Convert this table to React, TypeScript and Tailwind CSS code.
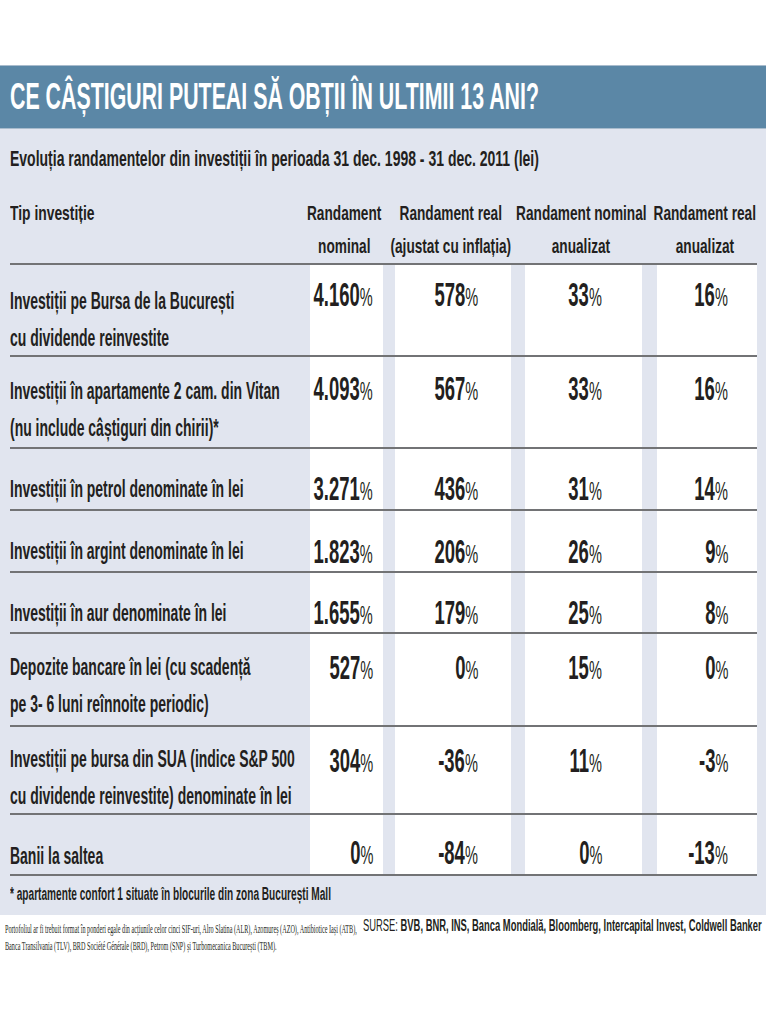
const sans = "font-['Liberation_Sans',Arial,sans-serif]";
const serif = "font-['Liberation_Serif','Times_New_Roman',serif]";

type Row = {
  label: string[];
  vals: string[];
  h: string;
  lpt: string;
  npt: string;
};

const rows: Row[] = [
  {
    label: ["Investiții pe Bursa de la București", "cu dividende reinvestite"],
    vals: ["4.160", "578", "33", "16"],
    h: "h-[92px]",
    lpt: "pt-[17px]",
    npt: "pt-[13px]",
  },
  {
    label: ["Investiții în apartamente 2 cam. din Vitan", "(nu include câștiguri din chirii)*"],
    vals: ["4.093", "567", "33", "16"],
    h: "h-[92px]",
    lpt: "pt-[15px]",
    npt: "pt-[15px]",
  },
  {
    label: ["Investiții în petrol denominate în lei"],
    vals: ["3.271", "436", "31", "14"],
    h: "h-[62px]",
    lpt: "pt-[21px]",
    npt: "pt-[23px]",
  },
  {
    label: ["Investiții în argint denominate în lei"],
    vals: ["1.823", "206", "26", "9"],
    h: "h-[62px]",
    lpt: "pt-[21px]",
    npt: "pt-[24px]",
  },
  {
    label: ["Investiții în aur denominate în lei"],
    vals: ["1.655", "179", "25", "8"],
    h: "h-[61px]",
    lpt: "pt-[21px]",
    npt: "pt-[23px]",
  },
  {
    label: ["Depozite bancare în lei (cu scadență", "pe 3- 6 luni reînnoite periodic)"],
    vals: ["527", "0", "15", "0"],
    h: "h-[93px]",
    lpt: "pt-[14px]",
    npt: "pt-[17px]",
  },
  {
    label: ["Investiții pe bursa din SUA (indice S&P 500", "cu dividende reinvestite) denominate în lei"],
    vals: ["304", "-36", "11", "-3"],
    h: "h-[88px]",
    lpt: "pt-[13px]",
    npt: "pt-[17px]",
  },
  {
    label: ["Banii la saltea"],
    vals: ["0", "-84", "0", "-13"],
    h: "h-[61px]",
    lpt: "pt-[22px]",
    npt: "pt-[21px]",
  },
];

const cols = [
  { w: "w-[73px]", ml: "", pr: "pr-[10px]" },
  { w: "w-[116px]", ml: "ml-[12px]", pr: "pr-[33px]" },
  { w: "w-[117px]", ml: "ml-[14px]", pr: "pr-[40px]" },
  { w: "w-[100px]", ml: "ml-[15px]", pr: "pr-[29px]" },
];

const heads = [
  ["Randament", "nominal"],
  ["Randament real", "(ajustat cu inflația)"],
  ["Randament nominal", "anualizat"],
  ["Randament real", "anualizat"],
];

function Num({ v }: { v: string }) {
  return (
    <span className="inline-block origin-right scale-x-[0.56] whitespace-nowrap">
      <span className="font-bold">{v}</span>
      <span className="text-[26px] font-normal">%</span>
    </span>
  );
}

export default function App() {
  return (
    <div className={`${sans} h-[1024px] w-[768px] overflow-hidden bg-white text-[#231f20]`}>
      <div className="h-[65px]" />

      {/* title band */}
      <div className="h-[64px] w-[766px] border-y border-[#a9bccd] bg-[#5b87a6] pl-[10px] pt-[13px]">
        <span className="inline-block origin-left scale-x-[0.593] whitespace-nowrap text-[36px] leading-none font-bold text-white">
          CE CÂȘTIGURI PUTEAI SĂ OBȚII ÎN ULTIMII 13 ANI?
        </span>
      </div>

      <div className="h-[786px] w-[766px] bg-[#e1e5ef]">
        <div className="h-[42px] pl-[10px] pt-[19px]">
          <span className="block origin-left scale-x-[0.622] whitespace-nowrap text-[22.5px] leading-none font-bold">
            Evoluția randamentelor din investiții în perioada 31 dec. 1998 - 31 dec. 2011 (lei)
          </span>
        </div>

        {/* header */}
        <div className="ml-[10px] flex h-[94px] w-[747px] border-b-2 border-[#727375] pt-[25px] text-[21px] leading-[33px] font-bold">
          <div className="w-[300px]">
            <span className="block origin-left scale-x-[0.66] whitespace-nowrap">Tip investiție</span>
          </div>
          {heads.map((h, i) => (
            <div key={i} className={`${cols[i].w} ${cols[i].ml} flex flex-col items-center pr-[5px]`}>
              {h.map((t) => (
                <span key={t} className="origin-center scale-x-[0.65] whitespace-nowrap">
                  {t}
                </span>
              ))}
            </div>
          ))}
        </div>

        {rows.map((r, ri) => (
          <div key={ri} className={`ml-[10px] flex w-[747px] border-b-2 border-[#727375] ${r.h}`}>
            <div className={`w-[300px] text-[24.5px] leading-[37px] font-bold ${r.lpt}`}>
              {r.label.map((l) => (
                <span key={l} className="block origin-left scale-x-[0.57] whitespace-nowrap">
                  {l}
                </span>
              ))}
            </div>
            {r.vals.map((v, i) => (
              <div
                key={i}
                className={`${cols[i].w} ${cols[i].ml} ${cols[i].pr} ${r.npt} flex items-start justify-end bg-white text-[33px] leading-none`}
              >
                <Num v={v} />
              </div>
            ))}
          </div>
        ))}

        <div className="pl-[10px] pt-[9px]">
          <span className="block origin-left scale-x-[0.562] whitespace-nowrap text-[18px] leading-none font-bold">
            * apartamente confort 1 situate în blocurile din zona București Mall
          </span>
        </div>
      </div>

      {/* bottom notes */}
      <div className="flex">
        <div className={`${serif} ml-[5px] w-[358px] pt-[6px] text-[12px] leading-[17px]`}>
          <span className="block origin-left scale-x-[0.515] whitespace-nowrap">
            Portofoliul ar fi trebuit format în ponderi egale din acțiunile celor cinci SIF-uri, Alro Slatina (ALR), Azomureș (AZO), Antibiotice Iași (ATB),
          </span>
          <span className="block origin-left scale-x-[0.515] whitespace-nowrap">
            Banca Transilvania (TLV), BRD Société Générale (BRD), Petrom (SNP) și Turbomecanica București (TBM).
          </span>
        </div>
        <div className="w-[400px] pt-[3px] text-[16px] leading-none">
          <span className="block origin-left scale-x-[0.587] whitespace-nowrap">
            <span className="font-normal">SURSE: </span>
            <span className="font-bold">
              BVB, BNR, INS, Banca Mondială, Bloomberg, Intercapital Invest, Coldwell Banker
            </span>
          </span>
        </div>
      </div>
    </div>
  );
}
